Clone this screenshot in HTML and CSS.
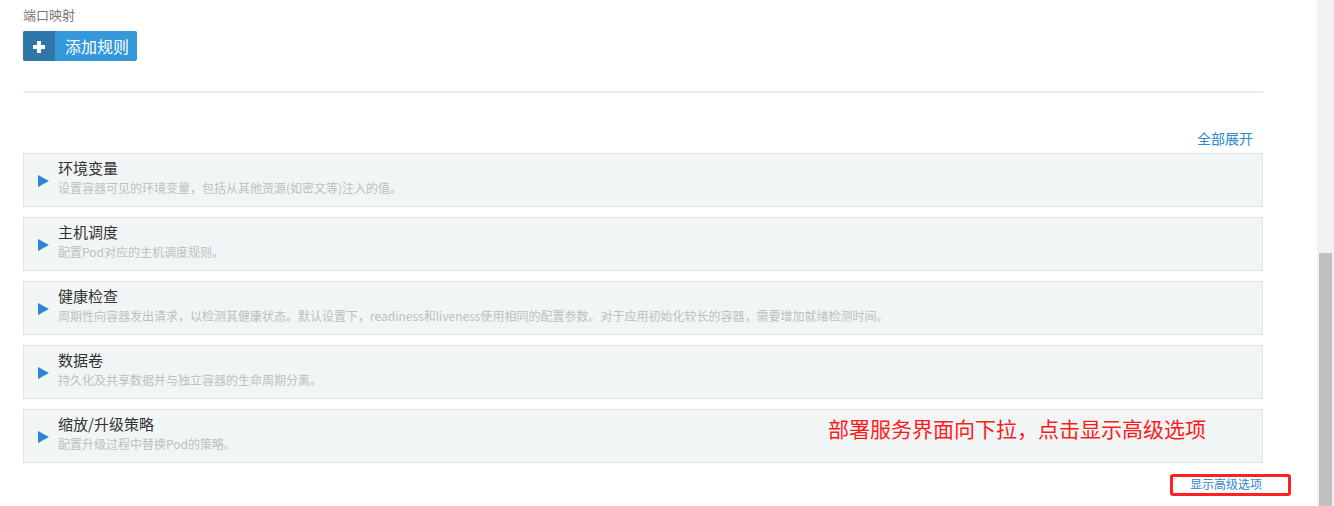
FILE: index.html
```html
<!DOCTYPE html>
<html lang="zh-CN">
<head>
<meta charset="utf-8">
<title>端口映射</title>
<link rel="stylesheet" href="styles.css">
</head>
<body>
<div class="page">
  <main class="main">
    <div class="content">
      <div class="field-label">端口映射</div>
      <button class="add-btn" type="button">
        <span class="add-icon">
          <svg width="12" height="12" viewBox="0 0 12 12"><path d="M4 0h4v4h4v4H8v4H4V8H0V4h4z" fill="#fff"/></svg>
        </span>
        <span class="add-text">添加规则</span>
      </button>
      <div class="divider"></div>
      <div class="expand-row"><a class="link expand-all">全部展开</a></div>
      <div class="panels">
        <div class="panel">
          <span class="caret"></span>
          <div class="panel-body">
            <div class="panel-title">环境变量</div>
            <div class="panel-desc">设置容器可见的环境变量，包括从其他资源(如密文等)注入的值。</div>
          </div>
        </div>
        <div class="panel">
          <span class="caret"></span>
          <div class="panel-body">
            <div class="panel-title">主机调度</div>
            <div class="panel-desc">配置Pod对应的主机调度规则。</div>
          </div>
        </div>
        <div class="panel">
          <span class="caret"></span>
          <div class="panel-body">
            <div class="panel-title">健康检查</div>
            <div class="panel-desc">周期性向容器发出请求，以检测其健康状态。默认设置下，readiness和liveness使用相同的配置参数。对于应用初始化较长的容器，需要增加就绪检测时间。</div>
          </div>
        </div>
        <div class="panel">
          <span class="caret"></span>
          <div class="panel-body">
            <div class="panel-title">数据卷</div>
            <div class="panel-desc">持久化及共享数据并与独立容器的生命周期分离。</div>
          </div>
        </div>
        <div class="panel">
          <span class="caret"></span>
          <div class="panel-body">
            <div class="panel-title">缩放/升级策略</div>
            <div class="panel-desc">配置升级过程中替换Pod的策略。</div>
          </div>
        </div>
      </div>
      <div class="advanced-row"><a class="link advanced">显示高级选项</a></div>
    </div>
    <div class="annotation-text">部署服务界面向下拉，点击显示高级选项</div>
    <div class="annotation-box"></div>
  </main>
  <div class="scrollbar"><div class="thumb"></div></div>
</div>
</body>
</html>
```

FILE: styles.css
```css
html, body {
  margin: 0;
  padding: 0;
  height: 100%;
  overflow: hidden;
  background: #fff;
}
body {
  font-family: "Noto Sans CJK SC", "Microsoft YaHei", sans-serif;
  color: #333;
}
.page {
  display: flex;
  height: 506px;
}
.main {
  position: relative;
  flex: 1;
}
.content {
  width: 1240px;
  margin-left: 23px;
}
.field-label {
  margin-top: 5px;
  font-size: 13px;
  line-height: 20px;
  color: #777;
}
.add-btn {
  display: flex;
  align-items: stretch;
  margin-top: 6px;
  height: 30px;
  padding: 0;
  border: 0;
  border-radius: 2px;
  overflow: hidden;
  background: #3498db;
  font-family: inherit;
  cursor: pointer;
}
.add-icon {
  width: 32px;
  display: flex;
  align-items: center;
  justify-content: center;
  background: #2f77a9;
  padding-top: 2px;
  box-sizing: border-box;
}
.add-text {
  display: flex;
  align-items: center;
  padding: 0 8px 0 10px;
  color: #fff;
  font-size: 16px;
  line-height: 30px;
}
.divider {
  margin-top: 30px;
  height: 2px;
  background: #e9edee;
}
.expand-row {
  margin-top: 34px;
  text-align: right;
  padding-right: 10px;
  line-height: 20px;
}
.link {
  color: #2f87d0;
  cursor: pointer;
}
.expand-all {
  font-size: 14px;
}
.panels {
  margin-top: 5px;
  display: flex;
  flex-direction: column;
  gap: 10px;
}
.panel {
  display: flex;
  align-items: center;
  height: 54px;
  box-sizing: border-box;
  border: 1px solid #dde4e6;
  background: #f1f5f6;
  padding: 0 0 0 14px;
}
.caret {
  width: 0;
  height: 0;
  border-top: 6px solid transparent;
  border-bottom: 6px solid transparent;
  border-left: 11px solid #2e86d3;
  margin-right: 9px;
  margin-top: 2px;
}
.panel-body {
  padding-bottom: 4px;
}
.panel-title {
  font-size: 15px;
  line-height: 20px;
  color: #333;
}
.panel-desc {
  font-size: 12px;
  line-height: 20px;
  color: #bfbfbf;
  white-space: nowrap;
}
.advanced-row {
  margin-top: 9px;
  text-align: right;
  line-height: 20px;
}
.advanced {
  font-size: 12px;
  padding-right: 1px;
}
.annotation-text {
  position: absolute;
  left: 828px;
  top: 414px;
  font-size: 21px;
  line-height: 28px;
  color: #ff1a1a;
  white-space: nowrap;
}
.annotation-box {
  position: absolute;
  left: 1170px;
  top: 474px;
  width: 121px;
  height: 22px;
  box-sizing: border-box;
  border: 3px solid #ff2020;
  border-radius: 3px;
}
.scrollbar {
  width: 17px;
  background: #f1f1f1;
  padding: 253px 2px 0 2px;
  box-sizing: border-box;
  display: flex;
  flex-direction: column;
}
.thumb {
  flex: 1;
  background: #c1c1c1;
}
```
